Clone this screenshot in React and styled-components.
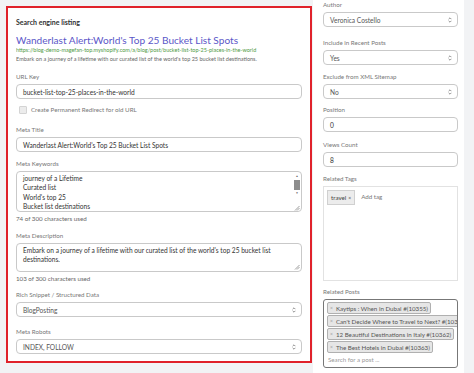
import React from "react";
import styled, { createGlobalStyle } from "styled-components";

const GlobalStyle = createGlobalStyle`
	html, body {
		margin: 0;
		padding: 0;
		background: #f2f3f5;
		font-family: "Lato", "Open Sans", sans-serif;
		color: #444;
	}
`;

const SelectArrows = () => (
	<svg width="4" height="6" viewBox="0 0 4 6">
		<path d="M0.6 2.2 L2 0.8 L3.4 2.2" fill="none" stroke="#777" strokeWidth="0.8" />
		<path d="M0.6 3.8 L2 5.2 L3.4 3.8" fill="none" stroke="#777" strokeWidth="0.8" />
	</svg>
);

const Grip = () => (
	<svg width="6" height="6" viewBox="0 0 6 6">
		<path d="M1 5.5 L5.5 1 M3 5.5 L5.5 3" stroke="#777" strokeWidth="0.7" />
	</svg>
);

const App = () => {
	const keywords = [
		"journey of a Lifetime",
		"Curated list",
		"World's top 25",
		"Bucket list destinations",
	];
	const posts = [
		"Kaytips : When in Dubai #(10355)",
		"Can't Decide Where to Travel to Next? #(10361)",
		"12 Beautiful Destinations in Italy #(10362)",
		"The Best Hotels in Dubai #(10363)",
	];

	return (
		<>
			<GlobalStyle />
			<StyledPage>
				<StyledLeft>
					<StyledCard>
						<StyledHeading>Search engine listing</StyledHeading>
						<StyledPreview>
							<StyledPreviewTitle>
								Wanderlast Alert:World's Top 25 Bucket List Spots
							</StyledPreviewTitle>
							<StyledPreviewUrl>
								https://blog-demo-magefan-top.myshopify.com/a/blog/post/bucket-list-top-25-places-in-the-world
							</StyledPreviewUrl>
							<StyledPreviewDesc>
								Embark on a journey of a lifetime with our curated list of the world's top 25 bucket list destinations.
							</StyledPreviewDesc>
						</StyledPreview>

						<StyledField $gap={8}>
							<StyledLabel>URL Key</StyledLabel>
							<StyledInput>bucket-list-top-25-places-in-the-world</StyledInput>
						</StyledField>

						<StyledCheckRow>
							<StyledCheckbox />
							<span>Create Permanent Redirect for old URL</span>
						</StyledCheckRow>

						<StyledField $gap={10}>
							<StyledLabel>Meta Title</StyledLabel>
							<StyledInput>Wanderlast Alert:World's Top 25 Bucket List Spots</StyledInput>
						</StyledField>

						<StyledField $gap={7}>
							<StyledLabel>Meta Keywords</StyledLabel>
							<StyledArea $height={41}>
								<StyledAreaText>
									{keywords.map((k) => (
										<div key={k}>{k}</div>
									))}
								</StyledAreaText>
								<StyledScrollbar>
									<StyledScrollArrow>▲</StyledScrollArrow>
									<StyledScrollThumb />
									<StyledScrollArrow>▼</StyledScrollArrow>
									<StyledGripCell>
										<Grip />
									</StyledGripCell>
								</StyledScrollbar>
							</StyledArea>
							<StyledHelp>74 of 300 characters used</StyledHelp>
						</StyledField>

						<StyledField $gap={8}>
							<StyledLabel>Meta Description</StyledLabel>
							<StyledArea $height={29}>
								<StyledAreaText>
									Embark on a journey of a lifetime with our curated list of the world's top 25 bucket list destinations.
								</StyledAreaText>
								<StyledGripCorner>
									<Grip />
								</StyledGripCorner>
							</StyledArea>
							<StyledHelp $space={2.5}>103 of 300 characters used</StyledHelp>
						</StyledField>

						<StyledField $gap={7}>
							<StyledLabel>Rich Snippet / Structured Data</StyledLabel>
							<StyledSelect>
								<span>BlogPosting</span>
								<SelectArrows />
							</StyledSelect>
						</StyledField>

						<StyledField $gap={10}>
							<StyledLabel>Meta Robots</StyledLabel>
							<StyledSelect>
								<span>INDEX, FOLLOW</span>
								<SelectArrows />
							</StyledSelect>
						</StyledField>
					</StyledCard>
				</StyledLeft>

				<StyledRight>
					<StyledField $gap={0}>
						<StyledLabel>Author</StyledLabel>
						<StyledSelect>
							<span>Veronica Costello</span>
							<SelectArrows />
						</StyledSelect>
					</StyledField>
					<StyledField $gap={11}>
						<StyledLabel>Include in Recent Posts</StyledLabel>
						<StyledSelect>
							<span>Yes</span>
							<SelectArrows />
						</StyledSelect>
					</StyledField>
					<StyledField $gap={7}>
						<StyledLabel>Exclude from XML Sitemap</StyledLabel>
						<StyledSelect>
							<span>No</span>
							<SelectArrows />
						</StyledSelect>
					</StyledField>
					<StyledField $gap={6}>
						<StyledLabel>Position</StyledLabel>
						<StyledInput>0</StyledInput>
					</StyledField>
					<StyledField $gap={8}>
						<StyledLabel>Views Count</StyledLabel>
						<StyledInput>8</StyledInput>
					</StyledField>
					<StyledField $gap={7}>
						<StyledLabel>Related Tags</StyledLabel>
						<StyledTagsBox>
							<StyledTag>
								travel <StyledTagX>×</StyledTagX>
							</StyledTag>
							<StyledAddTag>Add tag</StyledAddTag>
						</StyledTagsBox>
					</StyledField>
					<StyledField $gap={6}>
						<StyledLabel>Related Posts</StyledLabel>
						<StyledPostsBox>
							{posts.map((p) => (
								<StyledPostChip key={p}>
									<StyledChipX>×</StyledChipX>
									{p}
								</StyledPostChip>
							))}
							<StyledSearch>Search for a post ...</StyledSearch>
						</StyledPostsBox>
					</StyledField>
				</StyledRight>
				<StyledGutter />
			</StyledPage>
		</>
	);
};

export default App;

const StyledPage = styled.div`
	display: flex;
	width: 474px;
	height: 373px;
	overflow: hidden;
`;

const StyledLeft = styled.div`
	width: 313px;
	padding: 6px 0 0 6px;
	box-sizing: border-box;
	flex-shrink: 0;
`;

const StyledCard = styled.div`
	width: 306px;
	height: 357px;
	box-sizing: border-box;
	background: #fff;
	border: 2px solid #e0222b;
	padding: 9px 8px 0 8px;
	display: flex;
	flex-direction: column;
`;

const StyledHeading = styled.div`
	font-size: 7px;
	font-weight: 700;
	color: #333;
	line-height: 10px;
	margin-bottom: 8px;
`;

const StyledPreview = styled.div`
	display: flex;
	flex-direction: column;
	white-space: nowrap;
	overflow: hidden;
`;

const StyledPreviewTitle = styled.div`
	font-size: 10.1px;
	line-height: 11px;
	color: #5b57c8;
`;

const StyledPreviewUrl = styled.div`
	font-size: 5.5px;
	line-height: 9px;
	color: #4f9a45;
`;

const StyledPreviewDesc = styled.div`
	font-size: 5.55px;
	line-height: 9px;
	color: #666;
`;

const StyledField = styled.div`
	display: flex;
	flex-direction: column;
	margin-top: ${(p) => p.$gap ?? 8}px;
`;

const StyledLabel = styled.div`
	font-size: 6.2px;
	line-height: 10px;
	color: #777;
	margin-bottom: 2px;
`;

const StyledInput = styled.div`
	height: 15px;
	box-sizing: border-box;
	border: 1px solid #c9c9c9;
	border-radius: 4px;
	padding: 0 6px;
	display: flex;
	align-items: center;
	font-size: 6.6px;
	color: #333;
	background: #fff;
	white-space: nowrap;
	overflow: hidden;
`;

const StyledSelect = styled(StyledInput)`
	justify-content: space-between;
	color: #555;
	padding-right: 5px;
`;

const StyledCheckRow = styled.div`
	display: flex;
	align-items: center;
	gap: 4px;
	margin: 6px 0 0 3px;
	font-size: 6.2px;
	line-height: 10px;
	color: #777;
`;

const StyledCheckbox = styled.span`
	width: 6px;
	height: 6px;
	border: 1px solid #d4d4d4;
	background: #ececec;
	border-radius: 1px;
`;

const StyledArea = styled.div`
	height: ${(p) => p.$height}px;
	box-sizing: border-box;
	border: 1px solid #c9c9c9;
	border-radius: 4px;
	display: flex;
	overflow: hidden;
	background: #fff;
`;

const StyledAreaText = styled.div`
	flex: 1;
	padding: 2px 6px;
	font-size: 6.6px;
	line-height: 9.3px;
	color: #333;
	overflow: hidden;
`;

const StyledScrollbar = styled.div`
	width: 8px;
	display: flex;
	flex-direction: column;
	align-items: center;
	padding-top: 2px;
`;

const StyledScrollArrow = styled.div`
	font-size: 3px;
	line-height: 5px;
	color: #666;
`;

const StyledScrollThumb = styled.div`
	width: 6px;
	height: 10px;
	background: #8d8d8d;
	margin: 1px 0;
`;

const StyledGripCell = styled.div`
	margin-top: auto;
	display: flex;
`;

const StyledGripCorner = styled.div`
	display: flex;
	align-items: flex-end;
	padding: 0 1px 1px 0;
`;

const StyledHelp = styled.div`
	font-size: 6.2px;
	line-height: 9px;
	color: #666;
	margin-top: ${(p) => p.$space ?? 1.5}px;
`;

const StyledRight = styled.div`
	width: 151px;
	flex-shrink: 0;
	background: #fff;
	box-sizing: border-box;
	padding: 0 6px 0 10px;
	display: flex;
	flex-direction: column;
`;

const StyledGutter = styled.div`
	flex: 1;
	background: #f2f3f5;
`;

const StyledTagsBox = styled.div`
	height: 95px;
	box-sizing: border-box;
	border: 1px solid #e2e2e2;
	padding: 3px;
	display: flex;
	align-items: flex-start;
	gap: 6px;
`;

const StyledTag = styled.div`
	height: 15px;
	box-sizing: border-box;
	padding: 0 3px;
	border: 1px solid #d0d0d0;
	background: #ececec;
	display: flex;
	align-items: center;
	gap: 2px;
	font-size: 6.2px;
	color: #444;
`;

const StyledTagX = styled.span`
	font-size: 5px;
`;

const StyledAddTag = styled.div`
	font-size: 6.2px;
	color: #777;
	padding-top: 3px;
`;

const StyledPostsBox = styled.div`
	height: 69px;
	box-sizing: border-box;
	border: 1px solid #777;
	border-radius: 3px;
	padding: 2px 0 0 3px;
	display: flex;
	flex-direction: column;
	align-items: flex-start;
	gap: 1px;
	overflow: hidden;
`;

const StyledPostChip = styled.div`
	height: 12px;
	box-sizing: border-box;
	padding: 0 2px;
	border: 1px solid #b0b0b0;
	border-radius: 2px;
	background: #e6e6e6;
	display: flex;
	align-items: center;
	gap: 3px;
	font-size: 6.2px;
	color: #555;
	white-space: nowrap;
`;

const StyledChipX = styled.span`
	color: #999;
	font-size: 5px;
`;

const StyledSearch = styled.div`
	font-size: 6.2px;
	color: #999;
	margin-top: 2px;
	padding-left: 1px;
`;
